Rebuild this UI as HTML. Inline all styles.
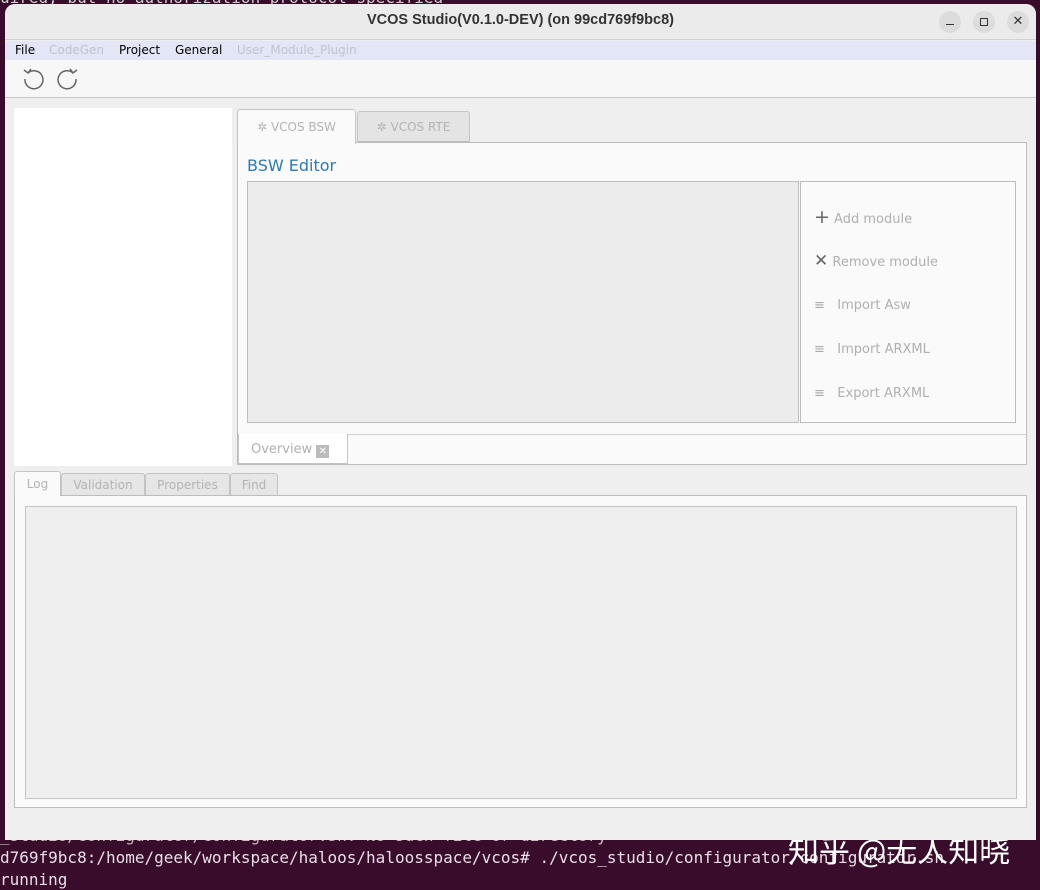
<!DOCTYPE html>
<html><head><meta charset="utf-8"><style>
*{margin:0;padding:0;box-sizing:border-box}
body{width:1040px;height:890px;background:#380c2a;position:relative;overflow:hidden;font-family:"DejaVu Sans","Liberation Sans",sans-serif}
.a{position:absolute}
.term{font-family:"DejaVu Sans Mono","Liberation Mono",monospace;color:#e8e0e6;font-size:16px;white-space:pre}
.win{left:5px;top:4px;width:1031px;height:836px;background:#efefef;border-radius:10px 10px 0 0;overflow:hidden}
.g{color:#b4b4b4}
.item{font-size:13px;color:#b0b0b0}
.tab{font-size:12px;color:#b4b4b4;text-align:center;border:1px solid #c4c4c4;border-bottom:none;border-radius:3px 3px 0 0}
</style></head><body>
<div class="a term" style="left:0;top:-12px;color:#ccc">uired, but no authorization protocol specified</div>
<div class="a term" style="left:0;top:826px;color:#cbb">_studio/configurator/configurator.sh: No such file or directory</div>
<div class="a term" style="left:0;top:848px">d769f9bc8:/home/geek/workspace/haloos/haloosspace/vcos# ./vcos_studio/configurator/configurator.sh</div>
<div class="a term" style="left:0;top:870px">running</div>
<div class="a" style="left:788px;top:826px;font-size:31px;color:#fff;font-family:'Noto Sans CJK SC',sans-serif">知乎 @无人知晓</div>

<div class="a win">
 <div class="a" style="left:0;top:0;width:1031px;height:36px;background:#ebebeb;border-bottom:1px solid #d2d2d2"></div>
 <div class="a" style="left:0;top:8px;width:1031px;text-align:center;font-size:14.5px;font-weight:bold;color:#333;font-family:'Liberation Sans',sans-serif">VCOS Studio(V0.1.0-DEV) (on 99cd769f9bc8)</div>
 <div class="a" style="left:934px;top:7px;width:22px;height:22px;border-radius:11px;background:#dcdcdc"></div>
 <div class="a" style="left:941px;top:20px;width:8px;height:1px;background:#333"></div>
 <div class="a" style="left:968px;top:7px;width:22px;height:22px;border-radius:11px;background:#dcdcdc"></div>
 <div class="a" style="left:975px;top:14px;width:8px;height:8px;border:1px solid #333"></div>
 <div class="a" style="left:1002px;top:7px;width:22px;height:22px;border-radius:11px;background:#dcdcdc;text-align:center;font-size:13px;line-height:22px;color:#333">✕</div>

 <div class="a" style="left:0;top:37px;width:1031px;height:19px;background:#e2e6f6;font-size:12px;line-height:19px">
  <span class="a" style="left:10px">File</span><span class="a g" style="left:44px;color:#c0c4ce">CodeGen</span><span class="a" style="left:114px">Project</span><span class="a" style="left:170px">General</span><span class="a" style="left:232px;color:#c0c4ce">User_Module_Plugin</span>
 </div>
 <div class="a" style="left:0;top:56px;width:1031px;height:38px;background:#f7f7f7;border-bottom:1px solid #c8c8c8"></div>
 <svg class="a" style="left:17px;top:63px" width="64" height="24" viewBox="0 0 64 24" fill="none" stroke="#666" stroke-width="1.5"><path d="M6 6 A9 9 0 1 1 3 12"/><path d="M2 3 L6 6 L9 2"/><path d="M54 6 A9 9 0 1 0 57 12" transform="translate(-3 0)"/><path d="M55 3 L51 6 L48 2"/></svg>

 <div class="a" style="left:9px;top:104px;width:218px;height:358px;background:#fff"></div>

 <div class="a" style="left:232px;top:138px;width:790px;height:323px;background:#fafafa;border:1px solid #bdbdbd"></div>
 <div class="a tab" style="left:232px;top:105px;width:119px;height:35px;background:#fafafa;line-height:34px">✲ VCOS BSW</div>
 <div class="a tab" style="left:352px;top:107px;width:113px;height:31px;background:#e4e4e4;line-height:30px;border-bottom:1px solid #bdbdbd">✲ VCOS RTE</div>
 <div class="a" style="left:242px;top:152px;font-size:16px;color:#2c7bb6">BSW Editor</div>
 <div class="a" style="left:242px;top:177px;width:552px;height:242px;background:#ececec;border:1px solid #bdbdbd"></div>
 <div class="a" style="left:795px;top:177px;width:216px;height:242px;background:#fafafa;border:1px solid #bdbdbd"></div>
 <div class="a item" style="left:809px;top:202px"><b style="color:#666;font-size:19px;font-weight:normal">+</b> Add module</div>
 <div class="a item" style="left:809px;top:247px"><span style="color:#666;font-size:17px">✕</span> Remove module</div>
 <div class="a item" style="left:809px;top:294px"><span style="color:#aaa">≡</span>&nbsp;&nbsp;&nbsp;Import Asw</div>
 <div class="a item" style="left:809px;top:338px"><span style="color:#aaa">≡</span>&nbsp;&nbsp;&nbsp;Import ARXML</div>
 <div class="a item" style="left:809px;top:382px"><span style="color:#aaa">≡</span>&nbsp;&nbsp;&nbsp;Export ARXML</div>
 <div class="a" style="left:233px;top:430px;width:788px;height:1px;background:#cfcfcf"></div>
 <div class="a" style="left:233px;top:430px;width:110px;height:30px;background:#fff;border:1px solid #c4c4c4;border-top:none;font-size:13px;color:#b0b0b0;padding:8px 0 0 12px">Overview <span style="display:inline-block;width:13px;height:13px;background:#bbb;color:#fff;font-size:10px;line-height:13px;text-align:center;vertical-align:-1px">✕</span></div>

 <div class="a" style="left:9px;top:491px;width:1013px;height:313px;background:#fafafa;border:1px solid #bdbdbd"></div>
 <div class="a tab" style="left:9px;top:467px;width:47px;height:25px;background:#fafafa;line-height:24px">Log</div>
 <div class="a tab" style="left:56px;top:469px;width:84px;height:22px;background:#e6e6e6;line-height:22px">Validation</div>
 <div class="a tab" style="left:140px;top:469px;width:85px;height:22px;background:#e6e6e6;line-height:22px">Properties</div>
 <div class="a tab" style="left:225px;top:469px;width:48px;height:22px;background:#e6e6e6;line-height:22px">Find</div>
 <div class="a" style="left:20px;top:502px;width:992px;height:293px;background:#efefef;border:1px solid #c4c4c4"></div>
</div>
</body></html>
